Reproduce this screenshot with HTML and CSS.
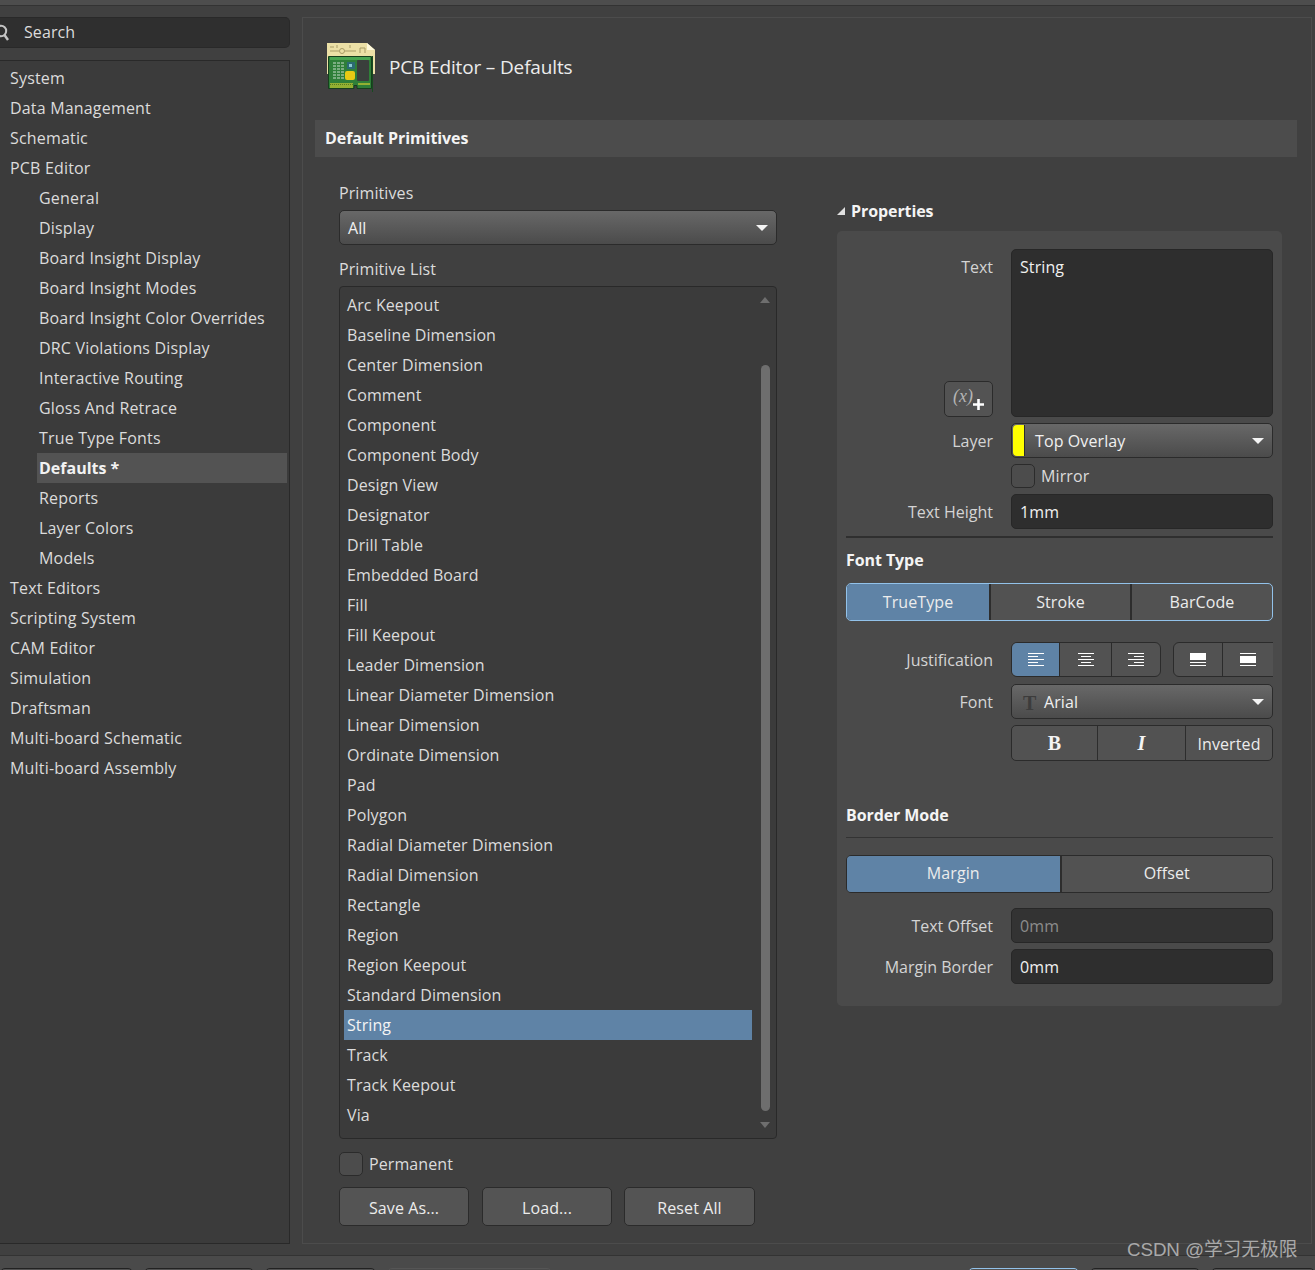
FILE: index.html
```html
<!DOCTYPE html>
<html lang="en">
<head>
<meta charset="utf-8">
<title>PCB Editor – Defaults</title>
<link rel="stylesheet" href="styles.css">
</head>
<body>
<div class="app">
  <div class="topbar"></div>
  <div class="main">
    <aside class="side">
      <div class="search">
        <svg class="search-icon" width="12" height="18" viewBox="0 0 12 18"><circle cx="2" cy="7" r="5.2" fill="none" stroke="#c4c4c4" stroke-width="2"/><path d="M5.5 11l3.5 5" stroke="#c4c4c4" stroke-width="2.4"/></svg>
        <span>Search</span>
      </div>
      <nav class="tree">
        <div class="node">System</div>
        <div class="node">Data Management</div>
        <div class="node">Schematic</div>
        <div class="node">PCB Editor</div>
        <div class="node child">General</div>
        <div class="node child">Display</div>
        <div class="node child">Board Insight Display</div>
        <div class="node child">Board Insight Modes</div>
        <div class="node child">Board Insight Color Overrides</div>
        <div class="node child">DRC Violations Display</div>
        <div class="node child">Interactive Routing</div>
        <div class="node child">Gloss And Retrace</div>
        <div class="node child">True Type Fonts</div>
        <div class="node child active">Defaults *</div>
        <div class="node child">Reports</div>
        <div class="node child">Layer Colors</div>
        <div class="node child">Models</div>
        <div class="node">Text Editors</div>
        <div class="node">Scripting System</div>
        <div class="node">CAM Editor</div>
        <div class="node">Simulation</div>
        <div class="node">Draftsman</div>
        <div class="node">Multi-board Schematic</div>
        <div class="node">Multi-board Assembly</div>
      </nav>
    </aside>
    <section class="panel">
      <header class="head">
        <svg class="logo" width="50" height="50" viewBox="0 0 50 50">
          <path d="M1 1h40l8 7v24H1z" fill="#ece0a6"/>
          <path d="M41 1v7h8z" fill="#fff9dc"/>
          <path d="M4 9h9M19 9h11M34 11v-5h5v5M11 3v3M24 3v3M4 5h4" stroke="#a99d66" stroke-width="1" fill="none"/>
          <circle cx="16" cy="9" r="2.5" fill="none" stroke="#a99d66"/>
          <path d="M2.500 14.500h43v32H31v-3H28v3H2.500z" fill="#2f7f38" stroke="#163f1c"/>
          <path d="M4 15h40v3H4z" fill="#4aa552"/>
          <path d="M4 41h23v5H4zM32 41h12v2H32z" fill="#93b032"/>
          <path d="M4 42.500h23" stroke="#5b7a1f" stroke-dasharray="1 1"/>
          <path d="M7 21h11M7 24h11M7 27h11M7 30h11M7 33h11M7 36h11" stroke="#c9ddca" stroke-width="1" stroke-dasharray="3 1"/>
          <rect x="21" y="20" width="8" height="7" fill="#2c6b73"/>
          <rect x="23" y="22" width="3" height="3" fill="#8ccad0"/>
          <rect x="31" y="18" width="12" height="21" rx="1" fill="#3a3f3c"/>
          <rect x="19" y="29" width="10" height="9" rx="2" fill="#e8c914"/>
          <path d="M46.500 14v36" stroke="#174a20"/>
        </svg>
        <h1 class="title">PCB Editor – Defaults</h1>
      </header>
      <h2 class="band">Default Primitives</h2>
      <div class="cols">
        <div class="left">
          <label class="cap first">Primitives</label>
          <div class="drop"><span>All</span><i class="caret"></i></div>
          <label class="cap second">Primitive List</label>
          <div class="list">
            <div class="rows">
              <div class="row">Arc Keepout</div>
              <div class="row">Baseline Dimension</div>
              <div class="row">Center Dimension</div>
              <div class="row">Comment</div>
              <div class="row">Component</div>
              <div class="row">Component Body</div>
              <div class="row">Design View</div>
              <div class="row">Designator</div>
              <div class="row">Drill Table</div>
              <div class="row">Embedded Board</div>
              <div class="row">Fill</div>
              <div class="row">Fill Keepout</div>
              <div class="row">Leader Dimension</div>
              <div class="row">Linear Diameter Dimension</div>
              <div class="row">Linear Dimension</div>
              <div class="row">Ordinate Dimension</div>
              <div class="row">Pad</div>
              <div class="row">Polygon</div>
              <div class="row">Radial Diameter Dimension</div>
              <div class="row">Radial Dimension</div>
              <div class="row">Rectangle</div>
              <div class="row">Region</div>
              <div class="row">Region Keepout</div>
              <div class="row">Standard Dimension</div>
              <div class="row selected">String</div>
              <div class="row">Track</div>
              <div class="row">Track Keepout</div>
              <div class="row">Via</div>
            </div>
            <div class="scroll">
              <i class="arrow up"></i>
              <i class="thumb"></i>
              <i class="arrow down"></i>
            </div>
          </div>
          <div class="check-row permanent"><i class="check"></i><span>Permanent</span></div>
          <div class="actions">
            <button class="btn">Save As...</button>
            <button class="btn">Load...</button>
            <button class="btn">Reset All</button>
          </div>
        </div>
        <div class="right">
          <div class="prop-title"><i class="tri"></i><span>Properties</span></div>
          <div class="props">
            <div class="line text-line">
              <div class="lab text-lab">
                <span>Text</span>
                <button class="fx"><em>(x)</em><svg class="plus" width="13" height="13" viewBox="0 0 13 13"><path d="M6.500 1v11M1 6.500h11" stroke="#fff" stroke-width="2.600"/></svg></button>
              </div>
              <div class="field area">String</div>
            </div>
            <div class="line l-layer">
              <div class="lab">Layer</div>
              <div class="drop ctl"><i class="swatch"></i><span>Top Overlay</span><i class="caret"></i></div>
            </div>
            <div class="line l-mirror">
              <div class="lab"></div>
              <div class="check-row"><i class="check"></i><span>Mirror</span></div>
            </div>
            <div class="line l-height">
              <div class="lab">Text Height</div>
              <div class="field ctl">1mm</div>
            </div>
            <div class="rule thick"></div>
            <div class="sub">Font Type</div>
            <div class="seg focus">
              <div class="seg-item on w-a">TrueType</div>
              <div class="seg-item w-b">Stroke</div>
              <div class="seg-item w-c">BarCode</div>
            </div>
            <div class="line l-just">
              <div class="lab">Justification</div>
              <div class="just">
                <div class="tools t-h">
                  <div class="tool on"><svg width="16" height="14" viewBox="0 0 16 14"><path d="M0 .5h16M0 3.500h10M0 6.500h16M0 9.500h10M0 12.500h16" stroke="#fff"/></svg></div>
                  <div class="tool wide"><svg width="16" height="14" viewBox="0 0 16 14"><path d="M0 .5h16M3 3.500h10M0 6.500h16M3 9.500h10M0 12.500h16" stroke="#fff"/></svg></div>
                  <div class="tool"><svg width="16" height="14" viewBox="0 0 16 14"><path d="M0 .5h16M6 3.500h10M0 6.500h16M6 9.500h10M0 12.500h16" stroke="#fff"/></svg></div>
                </div>
                <div class="tools t-v">
                  <div class="tool"><svg width="16" height="14" viewBox="0 0 16 14"><path d="M0 0h16v7H0z" fill="#fff"/><path d="M0 9.500h16M0 12.500h16" stroke="#fff"/></svg></div>
                  <div class="tool"><svg width="16" height="14" viewBox="0 0 16 14"><path d="M0 .5h16M0 12.500h16" stroke="#fff"/><path d="M0 3h16v7H0z" fill="#fff"/></svg></div>
                </div>
              </div>
            </div>
            <div class="line l-font">
              <div class="lab">Font</div>
              <div class="drop ctl"><span class="tt">T</span><span>Arial</span><i class="caret"></i></div>
            </div>
            <div class="line l-style">
              <div class="lab"></div>
              <div class="seg styles ctl">
                <div class="seg-item s-b"><b>B</b></div>
                <div class="seg-item s-i"><b><i>I</i></b></div>
                <div class="seg-item s-inv">Inverted</div>
              </div>
            </div>
            <div class="sub border-head">Border Mode</div>
            <div class="rule thin"></div>
            <div class="seg mode">
              <div class="seg-item on half">Margin</div>
              <div class="seg-item half">Offset</div>
            </div>
            <div class="line l-off">
              <div class="lab">Text Offset</div>
              <div class="field ctl dim">0mm</div>
            </div>
            <div class="line l-bord">
              <div class="lab">Margin Border</div>
              <div class="field ctl">0mm</div>
            </div>
          </div>
        </div>
      </div>
    </section>
  </div>
  <div class="bottom">
    <i class="tab t1"></i><i class="tab t2"></i><i class="tab t3"></i><i class="tab t4 faint"></i>
    <i class="spacer"></i>
    <i class="tab t5 ok"></i><i class="tab t6"></i><i class="tab t7"></i>
  </div>
  <div class="mark">CSDN @学习无极限</div>
</div>
</body>
</html>
```
FILE: styles.css
```css
* { box-sizing: border-box; }
html, body { margin: 0; height: 100%; }
body {
  background: #404040;
  color: #e6e6e6;
  font: 16px/20px "Open Sans", "Noto Sans CJK SC", sans-serif;
  letter-spacing: 0.1px;
  overflow: hidden;
}
.app { position: relative; width: 1315px; height: 1270px; display: flex; flex-direction: column; overflow: hidden; }
.topbar { height: 6px; background: #4d4d4d; border-bottom: 1px solid #333; flex: none; }
.main { flex: 1; display: flex; min-height: 0; padding-top: 11px; }
.side { width: 290px; flex: none; display: flex; flex-direction: column; }
.search {
  height: 31px; flex: none; display: flex; align-items: center; gap: 14px;
  background: #2f2f2f; border: 1px solid #292929; border-left: 0; border-radius: 0 5px 5px 0;
  color: #dcdcdc;
}
.search-icon { flex: none; margin-left: -1px; }
.search span { margin-left: -1px; margin-top: -1px; }
.tree {
  margin-top: 12px; height: 1184px; flex: none; padding: 2px 2px 0 0;
  background: #3b3b3b; border: 1px solid #292929; border-left: 0;
}
.node { height: 30px; line-height: 30px; padding-left: 10px; color: #dcdcdc; letter-spacing: 0.18px; }
.node.child { margin-left: 37px; padding-left: 2px; }
.node.active { background: #535353; font-weight: 700; color: #f2f2f2; letter-spacing: 0; }
.panel {
  margin-left: 12px; width: 1010px; height: 1227px; flex: none;
  border: 1px solid #4c4c4c;
  padding: 0 14px 0 12px;
}
.head { display: flex; align-items: center; height: 102px; padding: 0 0 5px 11px; gap: 13px; }
.logo { flex: none; }
.title { margin: 0; font-size: 19px; font-weight: 400; color: #ececec; letter-spacing: -0.15px; }
.band {
  margin: 0; height: 37px; line-height: 36px; padding-left: 10px;
  background: #4c4c4c; font-size: 16px; font-weight: 700; color: #f4f4f4; letter-spacing: -0.08px;
}
.cols { display: flex; padding-left: 24px; }
.left { width: 438px; flex: none; }
.cap { display: block; height: 20px; line-height: 20px; color: #dcdcdc; }
.cap.first { margin-top: 26px; }
.cap.second { margin-top: 14px; }
.drop {
  height: 35px; margin-top: 7px; padding: 0 8px; display: flex; align-items: center; position: relative;
  background: linear-gradient(#686868, #4b4b4b);
  border: 1px solid #2b2b2b; border-radius: 5px; color: #f0f0f0;
}
.caret {
  position: absolute; right: 8px; top: 14px; width: 0; height: 0;
  border-left: 6px solid transparent; border-right: 6px solid transparent; border-top: 6px solid #f4f4f4;
}
.list {
  margin-top: 7px; height: 853px; padding: 3px 0 0 4px; display: flex;
  background: #3b3b3b; border: 1px solid #292929; border-radius: 4px;
}
.rows { width: 408px; flex: none; }
.row { height: 30px; line-height: 30px; padding-left: 3px; color: #dcdcdc; }
.row.selected { background: #5f83a6; color: #f4f4f4; }
.scroll { flex: 1; position: relative; }
.thumb { position: absolute; left: 9px; top: 75px; width: 9px; height: 746px; border-radius: 5px; background: #6e6e6e; }
.arrow {
  position: absolute; left: 8px; width: 0; height: 0;
  border-left: 5px solid transparent; border-right: 5px solid transparent;
}
.arrow.up { top: 7px; border-bottom: 6px solid #6e6e6e; }
.arrow.down { top: 832px; border-top: 6px solid #6e6e6e; }
.check-row { display: flex; align-items: center; gap: 6px; color: #dcdcdc; }
.check {
  width: 24px; height: 24px; flex: none;
  background: #4c4c4c; border: 1px solid #2b2b2b; border-radius: 5px;
}
.permanent { margin-top: 13px; }
.actions { display: flex; gap: 13px; margin-top: 11px; }
.btn {
  width: 130px; height: 39px; padding: 2px 0 0;
  font: inherit; letter-spacing: inherit; color: #ececec;
  background: #545454; border: 1px solid #2b2b2b; border-radius: 5px;
}
.actions .btn:last-child { width: 131px; margin-left: -1px; }
.right { margin-left: 60px; width: 445px; flex: none; }
.prop-title { display: flex; align-items: center; height: 20px; margin-top: 44px; gap: 6px; font-weight: 700; color: #f4f4f4; letter-spacing: -0.08px; }
.tri { width: 8px; height: 8px; flex: none; background: #e0e0e0; clip-path: polygon(100% 0, 100% 100%, 0 100%); }
.props {
  margin-top: 10px; height: 775px; padding: 18px 9px 0; background: #4a4a4a; border-radius: 5px;
}
.line { display: flex; }
.lab { width: 147px; flex: none; padding-right: 0; text-align: right; color: #d4d4d4; align-self: center; letter-spacing: 0; }
.ctl, .area, .just { margin-left: 18px; width: 262px; flex: none; }
.field { background: #2e2e2e; border: 1px solid #272727; border-radius: 5px; color: #f0f0f0; padding-left: 8px; display: flex; align-items: center; }
.field.ctl { height: 35px; }
.area { height: 168px; align-items: flex-start; padding-top: 7px; }
.text-lab { align-self: stretch; display: flex; flex-direction: column; align-items: flex-end; justify-content: space-between; padding-top: 8px; }
.fx {
  width: 49px; height: 36px; padding: 0; position: relative;
  background: #535353; border: 1px solid #2b2b2b; border-radius: 5px;
}
.fx em { font: italic 18px/20px "Liberation Serif", serif; color: #b5b5b5; position: absolute; left: 8px; top: 4px; letter-spacing: 0; }
.plus { position: absolute; right: 7px; bottom: 5px; }
.l-layer { margin-top: 6px; }
.drop.ctl { margin-top: 0; margin-left: 18px; }
.l-layer .drop { padding-left: 23px; overflow: hidden; }
.swatch { position: absolute; left: 1px; top: 1px; bottom: 1px; width: 12px; background: #ffff00; border-right: 1px solid #2b2b2b; border-radius: 4px 0 0 4px; }
.l-mirror { margin-top: 6px; align-items: center; }
.l-mirror .check-row { margin-left: 18px; }
.l-height { margin-top: 6px; }
.rule { background: #2f2f2f; }
.rule.thick { height: 2px; margin-top: 7px; }
.rule.thin { height: 1px; background: #333; margin-top: 12px; }
.sub { height: 20px; line-height: 20px; font-weight: 700; color: #f4f4f4; letter-spacing: -0.08px; }
.rule.thick + .sub { margin-top: 12px; }
.seg { display: flex; border: 1px solid #2b2b2b; border-radius: 5px; overflow: hidden; background: #525252; }
.seg.focus { margin-top: 13px; height: 38px; border-color: #92c2ea; }
.seg-item { display: flex; align-items: center; justify-content: center; color: #ececec; border-left: 2px solid #2d2d2d; }
.seg-item:first-child { border-left: 0; }
.seg-item.on { background: #5f83a6; }
.w-a { width: 142px; } .w-b { width: 141px; } .w-c { width: 142px; }
.l-just { margin-top: 21px; }
.just { display: flex; gap: 12px; overflow: hidden; height: 35px; }
.tools { display: flex; flex: none; height: 35px; background: #525252; border: 1px solid #2b2b2b; border-radius: 6px; overflow: hidden; }
.t-h { width: 150px; }
.t-v { width: 108px; }
.tool { width: 50px; display: flex; align-items: center; justify-content: center; border-left: 1px solid #2b2b2b; }
.tool:first-child { border-left: 0; width: 48px; }
.tool.wide { width: 52px; }
.tool.on { background: #5f83a6; }
.l-font { margin-top: 7px; }
.tt { font: 700 20px/20px "Liberation Serif", serif; color: #3c3c3c; width: 21px; margin-top: 3px; letter-spacing: 0; }
.l-font .drop { padding-left: 11px; }
.l-style { margin-top: 6px; }
.styles { height: 36px; }
.styles .seg-item { border-left-width: 1px; }
.s-b { width: 85px; } .s-i { width: 88px; } .s-inv { width: 87px; padding-top: 1px; }
.styles b { font: 700 20px/20px "Liberation Serif", serif; color: #f4f4f4; }
.border-head { margin-top: 44px; }
.seg.mode { margin-top: 17px; height: 38px; }
.half { width: 50%; padding-bottom: 2px; }
.l-off { margin-top: 15px; }
.l-bord { margin-top: 6px; }
.dim { color: #8c8c8c; background: #333; }
.bottom { height: 15px; flex: none; display: flex; gap: 11px; background: #4a4a4a; border-top: 1px solid #333; padding-top: 12px; overflow: hidden; }
.tab { height: 30px; flex: none; background: #525252; border: 1px solid #222; border-radius: 5px; }
.t1 { width: 133px; } .t2 { width: 110px; } .t3 { width: 111px; } .t4 { width: 165px; }
.faint { border-color: #555; background: #4a4a4a; }
.spacer { flex: 1; }
.t5 { width: 111px; border-color: #92c2ea; } .t6 { width: 110px; } .t7 { width: 104px; }
.mark {
  position: absolute; left: 1127px; top: 1238px; font: 18.8px/24px "Liberation Sans", "Noto Sans CJK SC", sans-serif;
  letter-spacing: -0.1px; color: #a9a9a9; white-space: nowrap;
}
```
